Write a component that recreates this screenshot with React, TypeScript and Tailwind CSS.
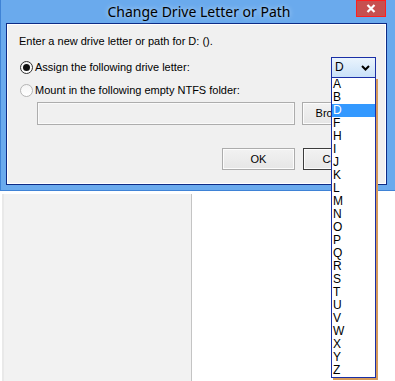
import React from "react";

const letters = ["A","B","D","F","H","I","J","K","L","M","N","O","P","Q","R","S","T","U","V","W","X","Y","Z"];

function Radio({ checked }: { checked: boolean }) {
  return (
    <div
      className={
        "w-[13px] h-[13px] rounded-full border flex items-center justify-center bg-gradient-to-b from-[#f4f4f4] to-[#ffffff] " +
        (checked ? "border-[#333333]" : "border-[#b5b5b5]")
      }
    >
      {checked && <div className="w-[7px] h-[7px] rounded-full bg-[#111111]" />}
    </div>
  );
}

function Btn({ label, focused }: { label: string; focused?: boolean }) {
  return (
    <div
      className={
        "w-[73px] h-full border flex items-center justify-center bg-gradient-to-b from-[#f2f2f2] to-[#e6e6e6] " +
        (focused ? "border-[#3c3c3c]" : "border-[#acacac]")
      }
    >
      <div className="w-full h-full border border-[#fcfcfc] flex items-center justify-center text-black">{label}</div>
    </div>
  );
}

export default function App() {
  return (
    <div
      className="w-[395px] h-[381px] bg-white relative overflow-hidden text-[11px] leading-[15px] text-black"
      style={{ fontFamily: '"Liberation Sans", Arial, sans-serif' }}
    >
      {/* Window */}
      <div className="h-[191px] bg-[#6aaaed] border-l border-b border-[#3f83d6] flex flex-col">
        {/* Title bar */}
        <div className="h-[23px] relative flex items-center justify-center">
          <span
            className="text-[14px] leading-[18px] text-black ml-[2px] [text-shadow:0_0_5px_rgba(255,255,255,0.7)]"
            style={{ fontFamily: '"Noto Sans", "Open Sans", sans-serif' }}
          >
            Change Drive Letter or Path
          </span>
          <div className="absolute right-[9px] top-0 w-[30px] h-[17px] bg-[#c75050] border border-[#ff2020] flex items-center justify-center">
            <svg width="10" height="9" viewBox="0 0 10 9">
              <path d="M1.5 1 L8.5 8 M8.5 1 L1.5 8" stroke="white" strokeWidth="2.2" />
            </svg>
          </div>
        </div>
        {/* Client */}
        <div className="ml-[5px] mr-[8px] h-[162px] border border-[#0d2b86]">
          <div className="w-full h-full border border-white bg-[#f0f0f0] flex flex-col">
            <div className="mt-[9px] h-[15px] pl-[11px] whitespace-nowrap">
              Enter a new drive letter or path for D: ().
            </div>
            <div className="mt-[8px] h-[20px] pl-[12px] pr-[9px] flex items-center justify-between">
              <div className="flex items-center gap-[2px]">
                <Radio checked />
                <span>Assign the following drive letter:</span>
              </div>
              <div className="w-[45px] h-[20px] border border-[#1a2fa6] border-b-0 bg-gradient-to-b from-[#eaf4fd] to-[#c9e1f8] flex items-center justify-between pl-[3px] pr-[5px] text-[12px]">
                <span>D</span>
                <svg width="9" height="6" viewBox="0 0 9 6">
                  <path d="M1 1 L4.5 4.5 L8 1" stroke="black" strokeWidth="2" fill="none" />
                </svg>
              </div>
            </div>
            <div className="mt-[5px] h-[16px] pl-[12px] flex items-center gap-[2px]">
              <Radio checked={false} />
              <span>Mount in the following empty NTFS folder:</span>
            </div>
            <div className="mt-[4px] h-[23px] pl-[29px] flex gap-[7px]">
              <div className="w-[258px] h-full border border-[#adadad]">
                <div className="w-full h-full border border-[#fafafa] bg-[#f0f0f0]" />
              </div>
              <Btn label="Browse..." />
            </div>
            <div className="mt-[23px] h-[22px] pr-[9px] flex justify-end gap-[8px]">
              <Btn label="OK" />
              <Btn label="Cancel" focused />
            </div>
          </div>
        </div>
      </div>
      {/* Below window */}
      <div className="flex mt-[3px] h-[187px]">
        <div className="ml-[2px] w-[190px] h-full bg-[#f2f2f2] border-l-2 border-[#e9e9e9] border-r border-r-[#c4c4c4]" />
      </div>
      {/* Dropdown list overlay */}
      <div className="absolute left-[331px] top-[77px] w-[45px] h-[301px] bg-white border border-[#1a2fa6] shadow-[2px_2px_0_#d79a5a] flex flex-col text-[12px]">
        {letters.map((l) => (
          <div
            key={l}
            className={
              "h-[13px] leading-[13px] pl-[1px] " + (l === "D" ? "bg-[#3399ff] text-white" : "text-black")
            }
          >
            {l}
          </div>
        ))}
      </div>
    </div>
  );
}
